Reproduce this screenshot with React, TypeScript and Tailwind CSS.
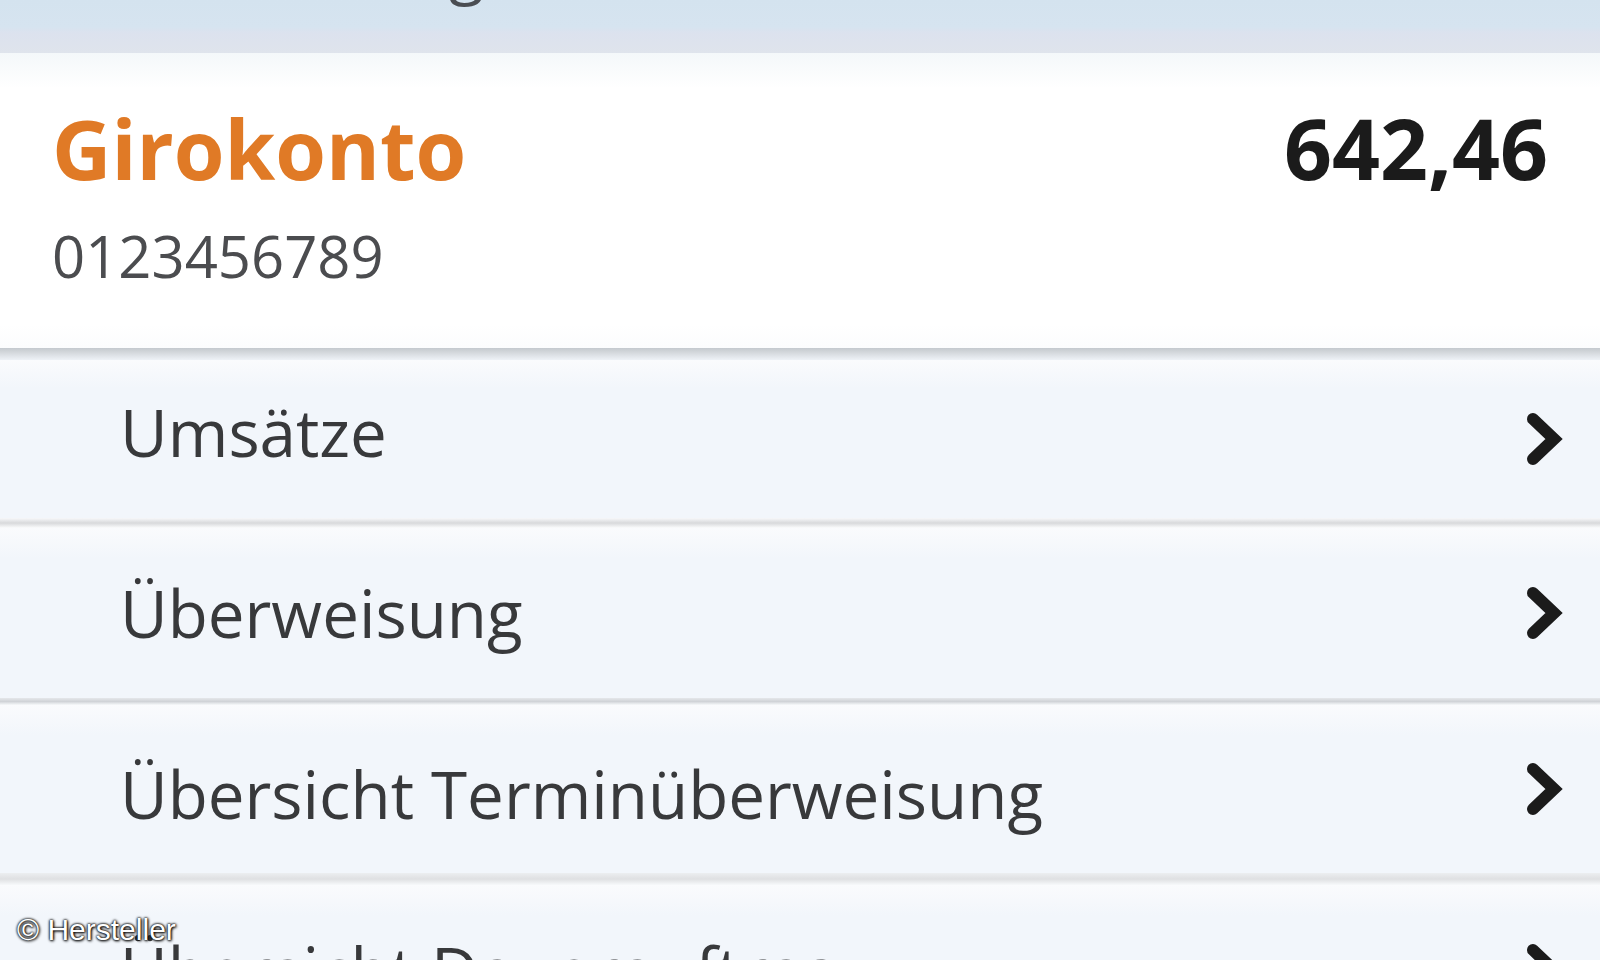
import React from 'react';

const Chevron: React.FC = () => (
  <svg width="40" height="58" viewBox="0 0 40 58" className="shrink-0">
    <polyline
      points="9,9 30,29 9,49"
      fill="none"
      stroke="#1b1b1b"
      strokeWidth="12"
      strokeLinecap="round"
      strokeLinejoin="miter"
    />
  </svg>
);

interface MenuRowProps {
  label: string;
  className: string;
  textClass?: string;
}

const MenuRow: React.FC<MenuRowProps> = ({ label, className, textClass = '' }) => (
  <div
    className={`flex items-center justify-between pl-[120px] pr-[36px] bg-[linear-gradient(to_bottom,#fafbfd,#f2f6fb_18%,#f2f6fb)] ${className}`}
  >
    <span className={`text-[65.5px] leading-[64px] text-[#38393b] whitespace-nowrap ${textClass}`}>{label}</span>
    <Chevron />
  </div>
);

export default function App() {
  return (
    <div className="relative h-[960px] w-[1600px] overflow-hidden bg-[#f2f6fb] font-['Open_Sans',sans-serif]">
      {/* top bar, title cut off by the screenshot */}
      <div className="h-[53px] overflow-hidden bg-[linear-gradient(to_bottom,#d4e3ef_0%,#d6e4f0_50%,#dce2ee_62%,#dfe4ec_100%)] flex justify-between pl-[66px] pr-[45px]">
        <span className="mt-[-64px] text-[64px] leading-[64px] text-[#4a4d52]">Kontoführung</span>
        <span className="mt-[-64px] text-[64px] leading-[64px] text-[#4a4d52]">Abmelden</span>
      </div>

      {/* account header */}
      <div className="h-[295px] bg-[linear-gradient(to_bottom,#f4f8fa,#ffffff_12%,#ffffff_92%,#fbfcfd)] pl-[52px] pr-[52px] pt-[53px]">
        <div className="flex items-baseline justify-between">
          <span className="text-[82px] leading-[84px] font-bold text-[#e07a26]">Girokonto</span>
          <span className="text-[84px] leading-[84px] font-bold text-[#1b1b1b]">642,46</span>
        </div>
        <div className="mt-[37px] text-[58px] leading-[58px] text-[#4b4c4f]">0123456789</div>
      </div>

      <div className="h-[12px] bg-[linear-gradient(to_bottom,#c4c9ce,#d3d7db_35%,#eef2f7)]" />
      <MenuRow label="Umsätze" className="h-[158px]" textClass="mb-[14px]" />

      <div className="h-[10px] bg-[linear-gradient(to_bottom,#f7f8fa,#d8d9db_50%,#fbfcfd)]" />
      <MenuRow label="Überweisung" className="h-[170px]" />

      <div className="h-[7px] bg-[linear-gradient(to_bottom,#e5e7ea,#d0d3d7_50%,#f7f9fb)]" />
      <MenuRow label="Übersicht Terminüberweisung" className="h-[168px]" textClass="mt-[10px]" />

      <div className="h-[12px] bg-[linear-gradient(to_bottom,#eceef0,#dfe0e2_50%,#f7f9fb)]" />
      <MenuRow label="Übersicht Dauerauftrag" className="h-[170px]" />

      <div className="absolute left-[17px] top-[913px] text-[30px] leading-[34px] text-white font-['Liberation_Sans',Arial,sans-serif] [text-shadow:0_0_2px_#000,0_0_3px_#000,1px_1px_3px_rgba(0,0,0,0.9)]">
        © Hersteller
      </div>
    </div>
  );
}
